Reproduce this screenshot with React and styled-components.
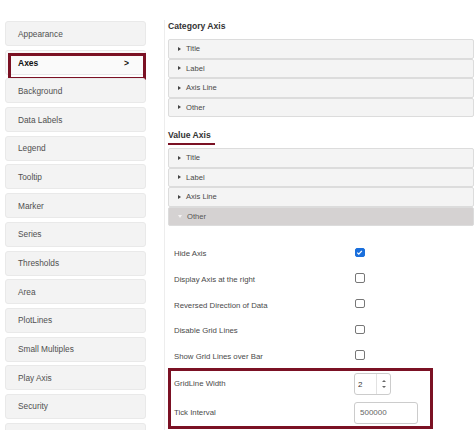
import React from 'react'
import styled, { createGlobalStyle, css } from 'styled-components'

const MAROON = '#7b1124'

const GlobalStyle = createGlobalStyle`
  html, body {
    margin: 0;
    background: #fff;
  }
  body {
    font-family: 'Liberation Sans', Arial, sans-serif;
    color: #333;
  }
  * {
    box-sizing: border-box;
  }
`

const Page = styled.div`
  display: flex;
  width: 474px;
  height: 430px;
  overflow: hidden;
`

const Sidebar = styled.nav`
  flex: 0 0 164px;
  padding: 21px 18px 0 5px;
`

const NavItem = styled.div`
  position: relative;
  display: flex;
  align-items: center;
  justify-content: space-between;
  height: 25px;
  margin-bottom: 3.7px;
  padding: 0 16px 0 12px;
  background: #f3f3f3;
  border: 1px solid #e9e9e9;
  border-radius: 3px;
  font-size: 8.3px;
  color: #505050;

  ${p =>
    p.$active &&
    css`
      background: #fafafa;
      font-weight: bold;
      font-size: 8.5px;
      color: #111;
      align-items: flex-start;
      padding-top: 7px;

      &::after {
        content: '';
        position: absolute;
        top: 2px;
        left: 2px;
        right: -1px;
        bottom: -6px;
        border: 3px solid ${MAROON};
      }
    `}
`

const Main = styled.main`
  flex: 1;
  border-left: 1px solid #ededed;
  padding-left: 3px;
  margin-top: 20px;
`

const Content = styled.div`
  margin-top: -20px;
`

const SectionTitle = styled.div`
  display: flex;
  padding-top: ${p => p.$top}px;
  margin-bottom: 3px;
`

const TitleText = styled.span`
  line-height: 16px;
  padding-right: 4px;
  font-size: 8.6px;
  font-weight: bold;
  color: #333;
  border-bottom: 2px solid ${p => (p.$underline ? MAROON : 'transparent')};
`

const AccordionRow = styled.div`
  display: flex;
  align-items: center;
  gap: 5px;
  height: 19.5px;
  padding-left: 9px;
  border: 1px solid #dcdcdc;
  border-radius: 2px;
  background: ${p => (p.$open ? '#d5d2d2' : '#f4f4f4')};
  font-size: 7.6px;
  color: ${p => (p.$open ? '#555' : '#484848')};
`

const Caret = styled.span`
  width: 0;
  height: 0;
  ${p =>
    p.$open
      ? css`
          border-left: 2.5px solid transparent;
          border-right: 2.5px solid transparent;
          border-top: 3px solid #f4f2f2;
        `
      : css`
          border-top: 2.5px solid transparent;
          border-bottom: 2.5px solid transparent;
          border-left: 3px solid #444;
        `}
`

const Settings = styled.div`
  margin-top: 15px;
  padding-left: 6px;
`

const SettingRow = styled.div`
  display: grid;
  grid-template-columns: 180px auto;
  align-items: center;
  height: ${p => p.$h || 25.7}px;
  font-size: 7.8px;
  color: #4a4a4a;
`

const Highlight = styled.div`
  width: 265px;
  margin-top: -1.5px;
  padding: 2px 0 2px 3px;
  border: 3px solid ${MAROON};
  display: flex;
  flex-direction: column;
  gap: 7px;
`

const Box = styled.span`
  display: inline-flex;
  align-items: center;
  justify-content: center;
  width: 9.5px;
  height: 9.5px;
  margin-top: -3px;
  margin-left: 1px;
  border-radius: 2px;
  border: 1px solid ${p => (p.$checked ? '#1a6fdc' : '#777')};
  background: ${p => (p.$checked ? '#1a6fdc' : '#fff')};
`

const NumberBox = styled.div`
  display: flex;
  width: 37px;
  height: 22px;
  border: 1px solid #ccc;
  border-radius: 3px;
  background: #fff;
`

const Field = styled.input`
  width: ${p => p.$w}px;
  height: 22px;
  padding: 0 ${p => p.$pad}px;
  border: ${p => (p.$bare ? 'none' : '1px solid #ccc')};
  border-radius: 3px;
  background: transparent;
  font-family: inherit;
  font-size: 8px;
  color: ${p => p.$color};
  outline: none;
`

const Spinner = styled.div`
  flex: 0 0 15px;
  display: flex;
  flex-direction: column;
  align-items: center;
  justify-content: center;
  gap: 4px;
  border-left: 1px solid #e2e2e2;
`

const Arrow = styled.span`
  width: 0;
  height: 0;
  border-left: 2.5px solid transparent;
  border-right: 2.5px solid transparent;
  ${p =>
    p.$down
      ? css`border-top: 2.5px solid #666;`
      : css`border-bottom: 2.5px solid #666;`}
`

const Checkbox = ({ checked }) => (
  <Box $checked={checked}>
    {checked && (
      <svg width="7" height="7" viewBox="0 0 10 10">
        <path d="M1.8 5.2 L4 7.4 L8.3 2.6" fill="none" stroke="#fff" strokeWidth="1.8" />
      </svg>
    )}
  </Box>
)

const navItems = [
  'Appearance',
  'Axes',
  'Background',
  'Data Labels',
  'Legend',
  'Tooltip',
  'Marker',
  'Series',
  'Thresholds',
  'Area',
  'PlotLines',
  'Small Multiples',
  'Play Axis',
  'Security',
  '',
]

const groups = ['Title', 'Label', 'Axis Line', 'Other']

const checks = [
  ['Hide Axis', true],
  ['Display Axis at the right', false],
  ['Reversed Direction of Data', false],
  ['Disable Grid Lines', false],
  ['Show Grid Lines over Bar', false],
]

export default function App() {
  return (
    <>
      <GlobalStyle />
      <Page>
        <Sidebar>
          {navItems.map(item => (
            <NavItem key={item} $active={item === 'Axes'}>
              <span>{item}</span>
              {item === 'Axes' && <span>&gt;</span>}
            </NavItem>
          ))}
        </Sidebar>
        <Main>
          <Content>
            <SectionTitle $top={18}>
              <TitleText>Category Axis</TitleText>
            </SectionTitle>
            {groups.map(g => (
              <AccordionRow key={g}>
                <Caret />
                {g}
              </AccordionRow>
            ))}

            <SectionTitle $top={10}>
              <TitleText $underline>Value Axis</TitleText>
            </SectionTitle>
            {groups.map(g => (
              <AccordionRow key={g} $open={g === 'Other'}>
                <Caret $open={g === 'Other'} />
                {g}
              </AccordionRow>
            ))}

            <Settings>
              {checks.map(([label, on]) => (
                <SettingRow key={label}>
                  <span>{label}</span>
                  <Checkbox checked={on} />
                </SettingRow>
              ))}
            </Settings>

            <Highlight>
              <SettingRow $h={22}>
                <span>GridLine Width</span>
                <NumberBox>
                  <Field $bare $w={21} $pad={3} $color="#333" defaultValue="2" readOnly />
                  <Spinner>
                    <Arrow />
                    <Arrow $down />
                  </Spinner>
                </NumberBox>
              </SettingRow>
              <SettingRow $h={22}>
                <span>Tick Interval</span>
                <Field $w={64} $pad={5} $color="#666" defaultValue="500000" readOnly />
              </SettingRow>
            </Highlight>
          </Content>
        </Main>
      </Page>
    </>
  )
}
